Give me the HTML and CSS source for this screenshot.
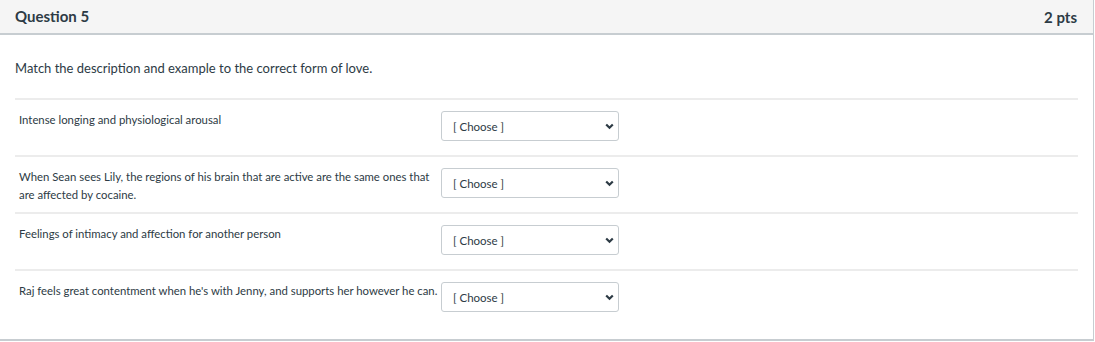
FILE: index.html
```html
<!DOCTYPE html>
<html lang="en">
<head>
    <meta charset="UTF-8">
    <title>Question 5</title>
    <link rel="stylesheet" href="styles.css">
</head>
<body>
    <div class="question">
        <div class="question-header">
            <span class="question-name">Question 5</span>
            <span class="question-points">2 pts</span>
        </div>
        <div class="question-body">
            <div class="question-text">Match the description and example to the correct form of love.</div>
            <div class="answers">
                <div class="answer-row">
                    <div class="answer-left">Intense longing and physiological arousal</div>
                    <div class="answer-right">
                        <div class="select-box"><span>[ Choose ]</span><svg class="chevron" width="9" height="7" viewBox="0 0 9 7"><path d="M1.2 1.5 L4.5 4.8 L7.8 1.5" fill="none" stroke="#2d3b45" stroke-width="2.2"/></svg></div>
                    </div>
                </div>
                <div class="answer-row">
                    <div class="answer-left">When Sean sees Lily, the regions of his brain that are active are the same ones that are affected by cocaine.</div>
                    <div class="answer-right">
                        <div class="select-box"><span>[ Choose ]</span><svg class="chevron" width="9" height="7" viewBox="0 0 9 7"><path d="M1.2 1.5 L4.5 4.8 L7.8 1.5" fill="none" stroke="#2d3b45" stroke-width="2.2"/></svg></div>
                    </div>
                </div>
                <div class="answer-row">
                    <div class="answer-left">Feelings of intimacy and affection for another person</div>
                    <div class="answer-right">
                        <div class="select-box"><span>[ Choose ]</span><svg class="chevron" width="9" height="7" viewBox="0 0 9 7"><path d="M1.2 1.5 L4.5 4.8 L7.8 1.5" fill="none" stroke="#2d3b45" stroke-width="2.2"/></svg></div>
                    </div>
                </div>
                <div class="answer-row">
                    <div class="answer-left">Raj feels great contentment when he's with Jenny, and supports her however he can.</div>
                    <div class="answer-right">
                        <div class="select-box"><span>[ Choose ]</span><svg class="chevron" width="9" height="7" viewBox="0 0 9 7"><path d="M1.2 1.5 L4.5 4.8 L7.8 1.5" fill="none" stroke="#2d3b45" stroke-width="2.2"/></svg></div>
                    </div>
                </div>
            </div>
        </div>
    </div>
</body>
</html>
```

FILE: styles.css
```css
body {
    margin: 0;
    padding: 0;
    font-family: Lato, "Helvetica Neue", Arial, sans-serif;
    color: #2d3b45;
    background-color: #fff;
}
.question {
    width: 1094px;
    height: 341px;
    box-sizing: border-box;
    border-right: 1px solid #c7cdd1;
    border-bottom: 2px solid #c7cdd1;
}
.question-header {
    height: 33px;
    display: flex;
    justify-content: space-between;
    align-items: center;
    padding: 0 16px 0 15px;
    background-color: #f5f5f5;
    border-bottom: 2px solid #c7cdd1;
    font-weight: bold;
    font-size: 15px;
    color: #2d3b45;
}
.question-header .question-name {
    margin-top: -1px;
}
.question-body {
    padding: 0 15px 0 15px;
}
.question-text {
    font-size: 13px;
    padding: 24px 0 21px 0;
    line-height: 18px;
}
.answers {
    border-top: 2px solid #ececec;
}
.answer-row {
    display: flex;
    height: 55px;
    border-bottom: 2px solid #ececec;
}
.answer-row:last-child {
    border-bottom: none;
}
.answer-left {
    width: 419px;
    padding: 11px 3px 0 4px;
    font-size: 11.35px;
    line-height: 18px;
}
.answer-right {
    padding-top: 11px;
}
.select-box {
    width: 178px;
    height: 30px;
    border: 1px solid #c7cdd1;
    border-radius: 3px;
    display: flex;
    justify-content: space-between;
    align-items: center;
    padding: 0 4px 0 11px;
    font-size: 11.5px;
    box-sizing: border-box;
    background-color: #fff;
}
.chevron {
    display: block;
}
```
